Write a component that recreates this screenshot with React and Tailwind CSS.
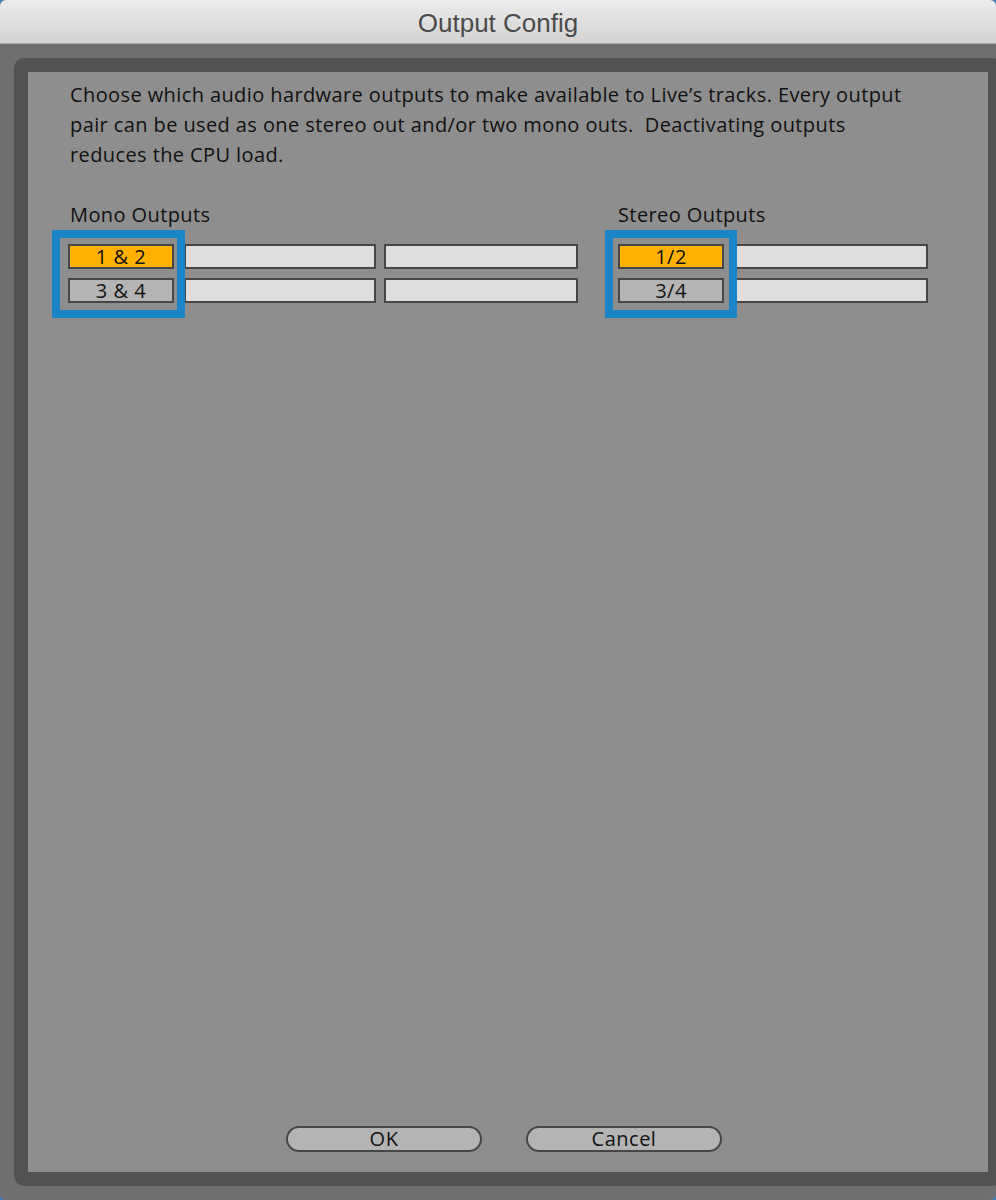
import React from 'react';

const FONT = { fontFamily: '"Open Sans", "Liberation Sans", sans-serif' };

function PairButton({ label, active }) {
  return (
    <div
      className={`w-[106px] h-[25px] border-2 border-[#464646] flex items-center justify-center text-[20px] font-medium tracking-[0.5px] text-[#111] leading-none ${
        active ? 'bg-[#ffb000]' : 'bg-[#b4b4b4]'
      }`}
    >
      {label}
    </div>
  );
}

function Bar({ width }) {
  return <div className={`h-[25px] border-2 border-[#464646] bg-[#dedede] ${width}`} />;
}

function Highlight({ left, width }) {
  return (
    <div
      className={`absolute top-[-14px] h-[88px] border-[8px] border-[#1a85c6] pointer-events-none ${left} ${width}`}
    />
  );
}

function MonoOutputs() {
  const rows = [
    { label: '1 & 2', active: true },
    { label: '3 & 4', active: false },
  ];
  return (
    <div className="w-[510px]">
      <div className="h-[30px] pl-[2px] flex items-center text-[20px] font-medium tracking-[0.4px] text-[#111]">
        Mono Outputs
      </div>
      <div className="relative mt-[14px] flex flex-col gap-[9px]">
        {rows.map((r) => (
          <div key={r.label} className="flex">
            <PairButton label={r.label} active={r.active} />
            <div className="ml-[10px]">
              <Bar width="w-[192px]" />
            </div>
            <div className="ml-[8px]">
              <Bar width="w-[194px]" />
            </div>
          </div>
        ))}
        <Highlight left="left-[-16px]" width="w-[133px]" />
      </div>
    </div>
  );
}

function StereoOutputs() {
  const rows = [
    { label: '1/2', active: true },
    { label: '3/4', active: false },
  ];
  return (
    <div className="w-[310px]">
      <div className="h-[30px] flex items-center text-[20px] font-medium tracking-[0.4px] text-[#111]">
        Stereo Outputs
      </div>
      <div className="relative mt-[14px] flex flex-col gap-[9px]">
        {rows.map((r) => (
          <div key={r.label} className="flex">
            <PairButton label={r.label} active={r.active} />
            <div className="ml-[10px]">
              <Bar width="w-[194px]" />
            </div>
          </div>
        ))}
        <Highlight left="left-[-13px]" width="w-[132px]" />
      </div>
    </div>
  );
}

function PillButton({ children }) {
  return (
    <button className="w-[196px] h-[26px] rounded-full border-2 border-[#464646] bg-[#b4b4b4] text-[20px] font-medium tracking-[0.5px] text-[#111] leading-none flex items-center justify-center">
      {children}
    </button>
  );
}

export default function App() {
  return (
    <div className="w-[996px] h-[1200px] bg-[#3f7fbf]" style={FONT}>
      <div className="w-full h-full flex flex-col rounded-[6px] overflow-hidden bg-[#6f6f6f]">
        {/* title bar */}
        <div
          className="h-[44px] shrink-0 flex items-center justify-center bg-gradient-to-b from-[#ececec] to-[#d3d3d3] border-b border-[#a9a9a9]"
          style={{ fontFamily: '"Liberation Sans", Arial, sans-serif' }}
        >
          <span className="text-[26px] text-[#4b4b4b] mt-[3px]">Output Config</span>
        </div>

        <div className="flex-1 p-[14px] flex">
          <div className="flex-1 rounded-[10px] bg-[#525252] p-[14px] flex">
            <div className="flex-1 bg-[#8e8e8e] flex flex-col px-[40px] pb-[20px]">
              <p className="mt-[8px] pl-[2px] text-[20px] font-medium tracking-[0.4px] leading-[30px] text-[#111] w-[880px]">
                Choose which audio hardware outputs to make available to Live’s tracks. Every output
                <br />
                pair can be used as one stereo out and/or two mono outs.&nbsp; Deactivating outputs
                <br />
                reduces the CPU load.
              </p>

              <div className="mt-[30px] flex gap-[40px]">
                <MonoOutputs />
                <StereoOutputs />
              </div>

              <div className="flex-1" />

              <div className="flex gap-[44px] pl-[218px]">
                <PillButton>OK</PillButton>
                <PillButton>Cancel</PillButton>
              </div>
            </div>
          </div>
        </div>
      </div>
    </div>
  );
}
